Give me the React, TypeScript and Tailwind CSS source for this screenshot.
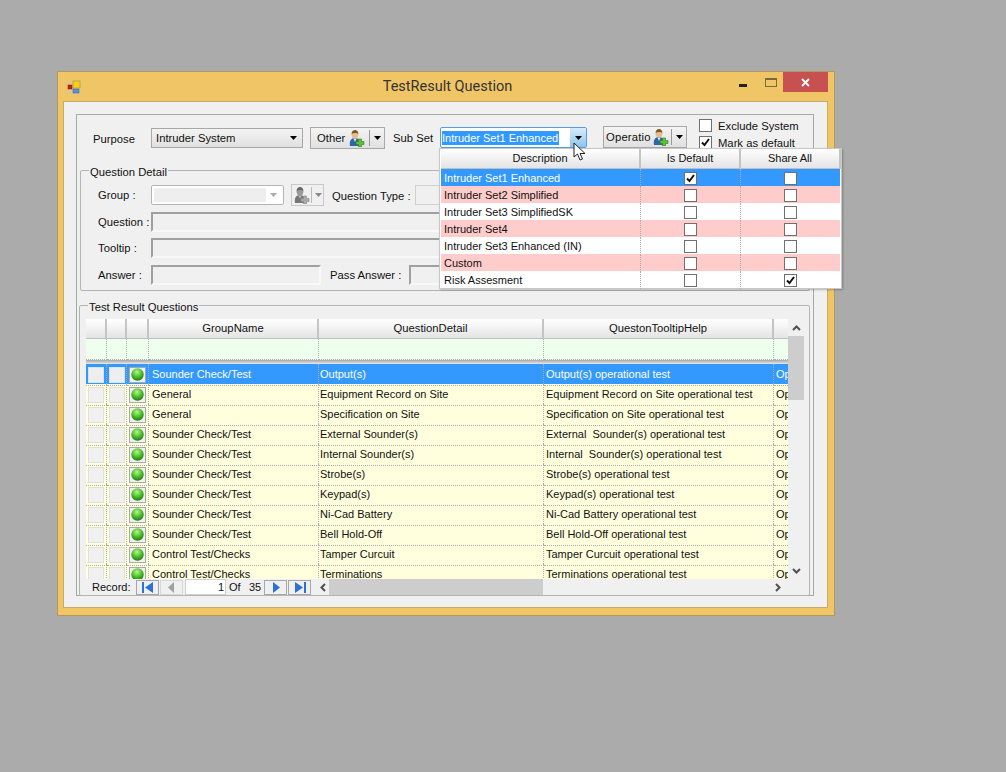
const F = "[font-family:'Liberation_Sans',Arial,sans-serif]";

function Tri({ c = "#000" }: { c?: string }) {
  return (
    <svg width="7" height="4" viewBox="0 0 7 4" className="shrink-0">
      <path d="M0 0h7L3.5 4z" fill={c} />
    </svg>
  );
}

function UserPlus({ gray = false }: { gray?: boolean }) {
  return (
    <svg width="16" height="17" viewBox="0 0 16 17" className="shrink-0">
      <path d="M1 16c-1-5 1-8 5-8s5 3 5 8z" fill={gray ? "#777" : "#2f66a8"} />
      <path d="M4.5 8.5h3L6 12z" fill={gray ? "#bbb" : "#e8eef5"} />
      <ellipse cx="6" cy="4.6" rx="3.4" ry="4" fill={gray ? "#999" : "#e6bd8c"} />
      <path d="M2.6 4C2.6 1.2 4.5 0 6 0s3.4 1.2 3.4 4C8 2.8 4.5 2.8 2.6 4z" fill={gray ? "#666" : "#7a5a22"} />
      <path d="M9.5 9h3v2.5H15v3h-2.5V17h-3v-2.5H7v-3h2.5z" fill={gray ? "#aaa" : "#5cc238"} stroke={gray ? "#888" : "#2a7f1a"} strokeWidth=".6" />
    </svg>
  );
}

function Ball() {
  return (
    <svg width="13" height="13" viewBox="0 0 13 13">
      <defs>
        <radialGradient id="ball" cx="45%" cy="30%" r="70%">
          <stop offset="0" stopColor="#b6f58e" />
          <stop offset=".55" stopColor="#4fc02a" />
          <stop offset="1" stopColor="#1f7d12" />
        </radialGradient>
      </defs>
      <circle cx="6.5" cy="6.5" r="6.2" fill="url(#ball)" />
    </svg>
  );
}

function Check({ on = false, bg = "bg-white" }: { on?: boolean; bg?: string }) {
  return (
    <span className={`flex h-[13px] w-[13px] shrink-0 items-center justify-center border border-[#707070] ${bg}`}>
      {on && (
        <svg width="11" height="11" viewBox="0 0 11 11">
          <path d="M2 5.5l2.5 2.5L9 2" fill="none" stroke="#111" strokeWidth="2" />
        </svg>
      )}
    </span>
  );
}

function Sunken({ className = "" }: { className?: string }) {
  return <div className={`h-full border-2 border-t-[#a0a0a0] border-l-[#a0a0a0] border-r-[#f8f8f8] border-b-[#f8f8f8] bg-[#f0f0f0] ${className}`} />;
}

function GroupBox({ title, className, children }: { title: string; className: string; children: React.ReactNode }) {
  return (
    <div className={`relative rounded-[2px] border border-[#b4b4b4] ${className}`}>
      <span className="absolute left-[8px] top-[-7px] bg-[#f0f0f0] px-[1px] leading-[16px] text-[#111]">{title}</span>
      {children}
    </div>
  );
}

const rows = [
  ["Sounder Check/Test", "Output(s)", "Output(s) operational test"],
  ["General", "Equipment Record on Site", "Equipment Record on Site operational test"],
  ["General", "Specification on Site", "Specification on Site operational test"],
  ["Sounder Check/Test", "External Sounder(s)", "External  Sounder(s) operational test"],
  ["Sounder Check/Test", "Internal Sounder(s)", "Internal  Sounder(s) operational test"],
  ["Sounder Check/Test", "Strobe(s)", "Strobe(s) operational test"],
  ["Sounder Check/Test", "Keypad(s)", "Keypad(s) operational test"],
  ["Sounder Check/Test", "Ni-Cad Battery", "Ni-Cad Battery operational test"],
  ["Sounder Check/Test", "Bell Hold-Off", "Bell Hold-Off operational test"],
  ["Control Test/Checks", "Tamper Curcuit", "Tamper Curcuit operational test"],
  ["Control Test/Checks", "Terminations", "Terminations operational test"],
];

const COLS = "grid grid-cols-[21px_20px_22px_170px_225px_230px_60px]";
const HEAD = "flex items-center justify-center border-r-2 border-b border-r-[#c4c4c4] border-b-[#c0c0c0] bg-gradient-to-b from-white to-[#e4e4e4] text-[#111]";
const DOT = "border-r border-b border-dotted border-[#acacac]";

const popupRows: [string, boolean, boolean][] = [
  ["Intruder Set1 Enhanced", true, false],
  ["Intruder Set2 Simplified", false, false],
  ["Intruder Set3 SimplifiedSK", false, false],
  ["Intruder Set4", false, false],
  ["Intruder Set3 Enhanced (IN)", false, false],
  ["Custom", false, false],
  ["Risk Assesment", false, true],
];

function Popup() {
  return (
    <div className="absolute left-[362px] top-[33px] z-10 h-[141px] w-[403px] border border-[#c8c8c8] bg-white px-[1px] text-[11px] shadow-[1px_1px_2px_rgba(0,0,0,0.25)]">
      <div className="grid h-[20px] grid-cols-[200px_100px_100px]">
        {["Description", "Is Default", "Share All"].map((h) => (
          <div key={h} className={HEAD}>{h}</div>
        ))}
      </div>
      {popupRows.map(([t, a, b], i) => {
        const bg = i === 0 ? "bg-[#3399ff]" : i % 2 === 1 ? "bg-[#ffcccc]" : "bg-white";
        return (
          <div key={t} className={`grid h-[17px] grid-cols-[200px_100px_100px] leading-[18px] ${bg} ${i === 0 ? "text-white" : "text-[#111]"}`}>
            <div className="border-r border-dotted border-[#acacac] pl-[3px]">{t}</div>
            <div className="flex items-center justify-center border-r border-dotted border-[#acacac]"><Check on={a} /></div>
            <div className="flex items-center justify-center pr-[2px]"><Check on={b} /></div>
          </div>
        );
      })}
    </div>
  );
}

function NavBtn({ d, off = false }: { d: string; off?: boolean }) {
  return (
    <span className={`flex h-[15px] w-[23px] shrink-0 items-center justify-center border ${off ? "border-[#d8d8d8]" : "border-[#a8a8a8]"}`}>
      <svg width="12" height="11" viewBox="0 0 12 11"><path d={d} fill={off ? "#a0a0a0" : "#2f6fd8"} /></svg>
    </span>
  );
}

function Grid() {
  return (
    <div className="ml-[6px] mt-[13px] flex h-[276px] w-[718px] flex-col text-[11px] text-[#111]">
      <div className="flex h-[260px]">
        <div className="w-[702px] overflow-hidden">
          <div className={`${COLS} h-[20px] w-[748px] text-[11.25px]`}>
            <div className={HEAD} />
            <div className={HEAD} />
            <div className={HEAD} />
            <div className={HEAD}>GroupName</div>
            <div className={HEAD}>QuestionDetail</div>
            <div className={HEAD}>QuestonTooltipHelp</div>
            <div className={HEAD} />
          </div>
          <div className={`${COLS} h-[21px] w-[748px] bg-[#eeffee]`}>
            {[0, 1, 2, 3, 4, 5, 6].map((i) => <div key={i} className={DOT} />)}
          </div>
          <div className="h-[4px] w-[748px] bg-gradient-to-b from-[#a8a8a8] to-[#e8e8e8]" />
          {rows.map((r, i) => {
            const sel = i === 0;
            return (
              <div key={i} className={`${COLS} h-[20px] w-[748px] whitespace-pre leading-[21px] ${sel ? "bg-[#3399ff] text-white" : "bg-[#ffffdd]"}`}>
                {[0, 1].map((k) => (
                  <div key={k} className={`${DOT} flex items-center justify-center`}>
                    <span className={`h-[16px] w-[16px] border ${sel ? "border-[#d8e4f0] bg-[#eeeeee]" : "border-[#e0e0e0] bg-[#f0f0f0]"}`} />
                  </div>
                ))}
                <div className={`${DOT} flex items-center justify-center`}>
                  <span className="flex h-[16px] w-[17px] items-center justify-center border border-[#a8a8a8] bg-[#f0f0f0]"><Ball /></span>
                </div>
                <div className={`${DOT} pl-[3px]`}>{r[0]}</div>
                <div className={`${DOT} pl-[1px]`}>{r[1]}</div>
                <div className={`${DOT} pl-[2px]`}>{r[2]}</div>
                <div className={`${DOT} pl-[2px]`}>Op</div>
              </div>
            );
          })}
        </div>
        <div className="flex w-[16px] flex-col items-center bg-[#f0f0f0]">
          <div className="flex h-[17px] items-center justify-center">
            <svg width="9" height="6" viewBox="0 0 9 6"><path d="M1 5l3.5-3.5L8 5" fill="none" stroke="#505050" strokeWidth="2" /></svg>
          </div>
          <div className="h-[64px] w-full bg-[#cdcdcd]" />
          <div className="flex-1" />
          <div className="flex h-[17px] items-center justify-center">
            <svg width="9" height="6" viewBox="0 0 9 6"><path d="M1 1l3.5 3.5L8 1" fill="none" stroke="#505050" strokeWidth="2" /></svg>
          </div>
        </div>
      </div>
      <div className="flex h-[16px] bg-[#f0f0f0]">
        <div className="flex w-[230px] items-center pl-[6px]">
          <span className="w-[44px] shrink-0">Record:</span>
          <NavBtn d="M0 0h2v11H0zM3 5.5L11 0v11z" />
          <span className="w-[1px]" />
          <NavBtn off d="M8 0v11L2 5.5z" />
          <span className="ml-[2px] h-[16px] w-[41px] shrink-0 border border-[#d0d0d0] bg-white pr-[1px] text-right leading-[14px]">1</span>
          <span className="ml-[3px] w-[20px] shrink-0">Of</span>
          <span className="w-[15px] shrink-0">35</span>
          <NavBtn d="M3 0v11l7-5.5z" />
          <span className="w-[1px]" />
          <NavBtn d="M1 0v11l8-5.5zM10 0h2v11h-2z" />
        </div>
        <div className="flex w-[472px] items-center">
          <span className="flex w-[13px] justify-center">
            <svg width="6" height="9" viewBox="0 0 6 9"><path d="M5 1L1.5 4.5 5 8" fill="none" stroke="#505050" strokeWidth="2" /></svg>
          </span>
          <span className="h-full w-[214px] bg-[#cdcdcd]" />
          <span className="flex-1" />
          <span className="mr-[7px] flex w-[6px] justify-center">
            <svg width="6" height="9" viewBox="0 0 6 9"><path d="M1 1l3.5 3.5L1 8" fill="none" stroke="#505050" strokeWidth="2" /></svg>
          </span>
        </div>
        <div className="w-[16px]" />
      </div>
    </div>
  );
}

export default function App() {
  return (
    <div className={`h-[772px] w-[1006px] overflow-hidden bg-[#ababab] pl-[57px] pt-[71px] ${F}`}>
      <div className="flex h-[545px] w-[778px] flex-col border border-[#b09a60] bg-[#f0c566] pb-[7px] pl-[5px] pr-[6px]">
        <div className="flex h-[29px] shrink-0">
          <div className="flex flex-1 items-start pl-[4px] pt-[8px]">
            <svg width="14" height="14" viewBox="0 0 14 14">
              <rect x="0" y="0" width="14" height="14" fill="#d8c8a0" opacity=".5" />
              <rect x="1" y="5" width="4" height="4" fill="#c8201c" stroke="#801010" strokeWidth=".5" />
              <rect x="6" y="1" width="7" height="7" fill="#f5d020" stroke="#a08010" strokeWidth=".5" />
              <rect x="6" y="9" width="6" height="4" fill="#5a90e0" stroke="#3060a0" strokeWidth=".5" />
            </svg>
          </div>
          <div className="pt-[5px] text-[14.5px] leading-[20px] text-[#333] [font-family:'Roboto',sans-serif]">TestResult Question</div>
          <div className="flex flex-1 items-start justify-end">
            <span className="mr-[18px] mt-[12px] h-[3px] w-[8px] bg-[#222]" />
            <span className="mr-[6px] mt-[6px] h-[9px] w-[12px] border border-t-2 border-[#7a6a40]" />
            <span className="flex h-[20px] w-[45px] items-center justify-center bg-[#c75050]">
              <svg width="9" height="9" viewBox="0 0 9 9"><path d="M1 1l7 7M8 1L1 8" stroke="#fff" strokeWidth="1.8" /></svg>
            </span>
          </div>
        </div>
        <div className="flex-1 border border-[#c8ad6a] bg-[#f0f0f0] pl-[12px] pt-[12px] text-[11.25px] text-[#111]">
          <div className="relative h-[482px] w-[738px] overflow-visible border border-[#a8a8a8]">
            <Popup />
            <svg width="14" height="19" viewBox="0 0 14 19" className="absolute left-[496px] top-[27px] z-20">
              <path d="M1 1v14l3.5-3 2.5 6 2.5-1-2.5-5.5H12z" fill="#fff" stroke="#222" strokeWidth="1" />
            </svg>
            <div className="flex h-[55px] items-start">
              <span className="ml-[16px] mt-[16px] w-[58px] leading-[16px]">Purpose</span>
              <div className="mt-[13px] flex h-[20px] w-[152px] items-center justify-between border border-[#a8a8a8] bg-gradient-to-b from-[#f4f4f4] to-[#e0e0e0] pl-[4px] pr-[5px]">
                <span>Intruder System</span><Tri />
              </div>
              <div className="ml-[7px] mt-[12px] flex h-[22px] w-[75px] items-center border border-[#a8a8a8] bg-gradient-to-b from-[#f4f4f4] to-[#e0e0e0] pl-[6px]">
                <span className="mr-[4px]">Other</span><UserPlus />
                <span className="ml-[4px] mr-[4px] h-[16px] w-px bg-[#999]" /><Tri />
              </div>
              <span className="ml-[8px] mt-[15px] w-[47px] leading-[16px]">Sub Set</span>
              <div className="mt-[12px] flex h-[21px] w-[147px] items-center justify-between rounded-[2px] border border-[#569de5] bg-white pl-[1px]">
                <span className="whitespace-nowrap bg-[#3399ff] pr-[1px] text-[11px] leading-[14px] text-white">Intruder Set1 Enhanced</span>
                <span className="flex h-full w-[16px] items-center justify-center bg-gradient-to-b from-[#d8ecfa] to-[#8cc4ea]"><Tri /></span>
              </div>
              <div className="ml-[16px] mt-[11px] flex h-[22px] w-[84px] items-center border border-[#a8a8a8] bg-gradient-to-b from-[#f4f4f4] to-[#e0e0e0] pl-[2px]">
                <span className="mr-[2px] tracking-[0.2px]">Operatio</span><UserPlus />
                <span className="ml-[2px] mr-[4px] h-[16px] w-px bg-[#999]" /><Tri />
              </div>
              <div className="ml-[12px] mt-[3px] flex flex-col gap-[2px]">
                <div className="flex items-center gap-[6px]"><Check /><span className="pt-[2px] leading-[13px]">Exclude System</span></div>
                <div className="flex items-center gap-[6px]"><Check on /><span className="pt-[2px] leading-[13px]">Mark as default</span></div>
              </div>
            </div>
            <GroupBox title="Question Detail" className="ml-[3px] h-[121px] w-[730px]">
              <div className="ml-[17px] mt-[14px] flex h-[20px]">
                <span className="w-[53px] leading-[20px]">Group :</span>
                <div className="flex w-[133px] items-center justify-between rounded-[2px] border border-[#b4b4b4] bg-white p-[2px] pr-[6px]">
                  <span className="h-full w-[112px] bg-[#eeeeee]" /><Tri c="#aaaaaa" />
                </div>
                <div className="ml-[7px] mt-[-1px] flex h-[22px] w-[33px] items-center border border-[#c8c8c8] pl-[2px]">
                  <UserPlus gray /><span className="ml-[1px] mr-[3px] h-[16px] w-px bg-[#bbb]" /><Tri c="#888" />
                </div>
                <span className="ml-[8px] mt-[1px] w-[83px] leading-[20px]">Question Type :</span>
                <div className="w-[80px] border border-[#d0d0d0]" />
              </div>
              <div className="ml-[17px] mt-[7px] flex h-[20px]">
                <span className="w-[53px] leading-[20px]">Question :</span>
                <Sunken className="w-[370px]" />
              </div>
              <div className="ml-[17px] mt-[6px] flex h-[20px]">
                <span className="w-[53px] leading-[20px]">Tooltip :</span>
                <Sunken className="w-[370px]" />
              </div>
              <div className="ml-[17px] mt-[7px] flex h-[20px]">
                <span className="w-[53px] leading-[20px]">Answer :</span>
                <Sunken className="w-[170px]" />
                <span className="ml-[9px] w-[79px] leading-[20px]">Pass Answer :</span>
                <Sunken className="w-[100px]" />
              </div>
            </GroupBox>
            <GroupBox title="Test Result Questions" className="ml-[2px] mt-[14px] h-[291px] w-[731px]">
              <Grid />
            </GroupBox>
          </div>
        </div>
      </div>
    </div>
  );
}
